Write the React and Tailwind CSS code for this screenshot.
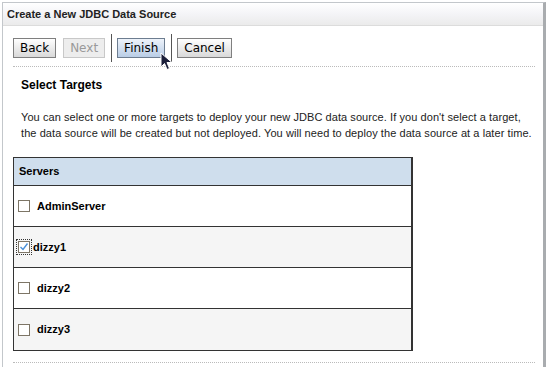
export default function App() {
  const servers = [
    { name: "AdminServer", checked: false },
    { name: "dizzy1", checked: true },
    { name: "dizzy2", checked: false },
    { name: "dizzy3", checked: false },
  ];

  return (
    <div className="w-[549px] h-[367px] bg-white relative overflow-hidden font-['Liberation_Sans',Arial,sans-serif] text-black">
      <div className="absolute inset-0 pt-[2px] pl-[2px] pr-[3px]">
        <div className="h-full border-l border-t border-[#c3c7cb] border-r-[3px] border-r-[#a9acaf] flex flex-col">
          {/* title bar */}
          <div className="h-[23px] bg-gradient-to-b from-white via-[#f4f4f7] to-[#ebebeb] border-b border-[#dcdcdc] flex items-center pl-[4px] pt-[1px]">
            <span className="text-[11px] font-bold text-[#222]">Create a New JDBC Data Source</span>
          </div>

          <div className="pl-[10px] pr-[8px]">
            {/* buttons */}
            <div className="flex items-center pt-[8px] pb-[4px] border-b border-dotted border-[#bbb]">
              <Btn label="Back" />
              <Btn label="Next" disabled className="ml-[7px]" />
              <div className="w-px h-[28px] bg-[#555] ml-[6px]" />
              <Btn label="Finish" active className="ml-[5px]" />
              <div className="w-px h-[28px] bg-[#555] ml-[6px]" />
              <Btn label="Cancel" className="ml-[5px]" />
            </div>

            <div className="pl-[8px] pt-[10px]">
              <div className="text-[12px] font-bold leading-[16px]">Select Targets</div>
              <p className="text-[11px] leading-[16px] mt-[16px] text-[#222] whitespace-nowrap tracking-[0.07px]">
                You can select one or more targets to deploy your new JDBC data source. If you don't select a target,
                <br />
                the data source will be created but not deployed. You will need to deploy the data source at a later time.
              </p>
            </div>

            {/* table */}
            <div className="mt-[16px] w-[400px] border border-[#333] border-r-2">
              <div className="h-[28px] bg-[#cfdeed] border-b border-[#333] flex items-center pl-[5px]">
                <span className="text-[11px] font-bold">Servers</span>
              </div>
              {servers.map((s, i) => (
                <div
                  key={s.name}
                  className={`h-[41px] flex items-center ${i % 2 ? "bg-[#f5f5f5]" : "bg-white"} ${i < servers.length - 1 ? "border-b border-[#333]" : ""}`}
                >
                  {s.checked ? (
                    <div className="ml-[2px] border border-dotted border-[#333] p-px flex">
                      <Box checked />
                    </div>
                  ) : (
                    <div className="ml-[4px] mr-[6px] flex">
                      <Box />
                    </div>
                  )}
                  <span className="text-[11px] font-bold ml-[1px]">{s.name}</span>
                </div>
              ))}
            </div>

            <div className="mt-[11px] border-b border-dotted border-[#bbb]" />
          </div>
        </div>
      </div>

      {/* mouse pointer */}
      <svg className="absolute left-[160px] top-[52px]" width="14" height="20" viewBox="0 0 14 20">
        <path d="M1 1 L1 15 L4.5 11.5 L7 17.5 L9.5 16.5 L7 10.5 L12 10.5 Z" fill="#1b1f3a" stroke="white" strokeWidth="1" />
      </svg>
    </div>
  );
}

function Btn({ label, disabled, active, className = "" }) {
  const base = "h-[20px] px-[6px] flex items-center text-[12px] font-['DejaVu_Sans',sans-serif] border";
  const look = disabled
    ? "bg-[#ededed] border-[#c8c8c8] text-[#999]"
    : active
    ? "bg-gradient-to-b from-[#eef3fa] to-[#b9cde6] border-[#6d7d90] text-black"
    : "bg-gradient-to-b from-white to-[#d9d9d9] border-[#7f7f7f] text-black";
  return <div className={`${base} ${look} ${className}`}>{label}</div>;
}

function Box({ checked }) {
  return (
    <div className="w-[12px] h-[12px] border border-[#7d7566] bg-white flex items-center justify-center">
      {checked && (
        <svg width="10" height="10" viewBox="0 0 10 10">
          <path d="M1.5 5 L4 7.5 L8.5 1.5" fill="none" stroke="#4a90d9" strokeWidth="1.4" />
        </svg>
      )}
    </div>
  );
}
